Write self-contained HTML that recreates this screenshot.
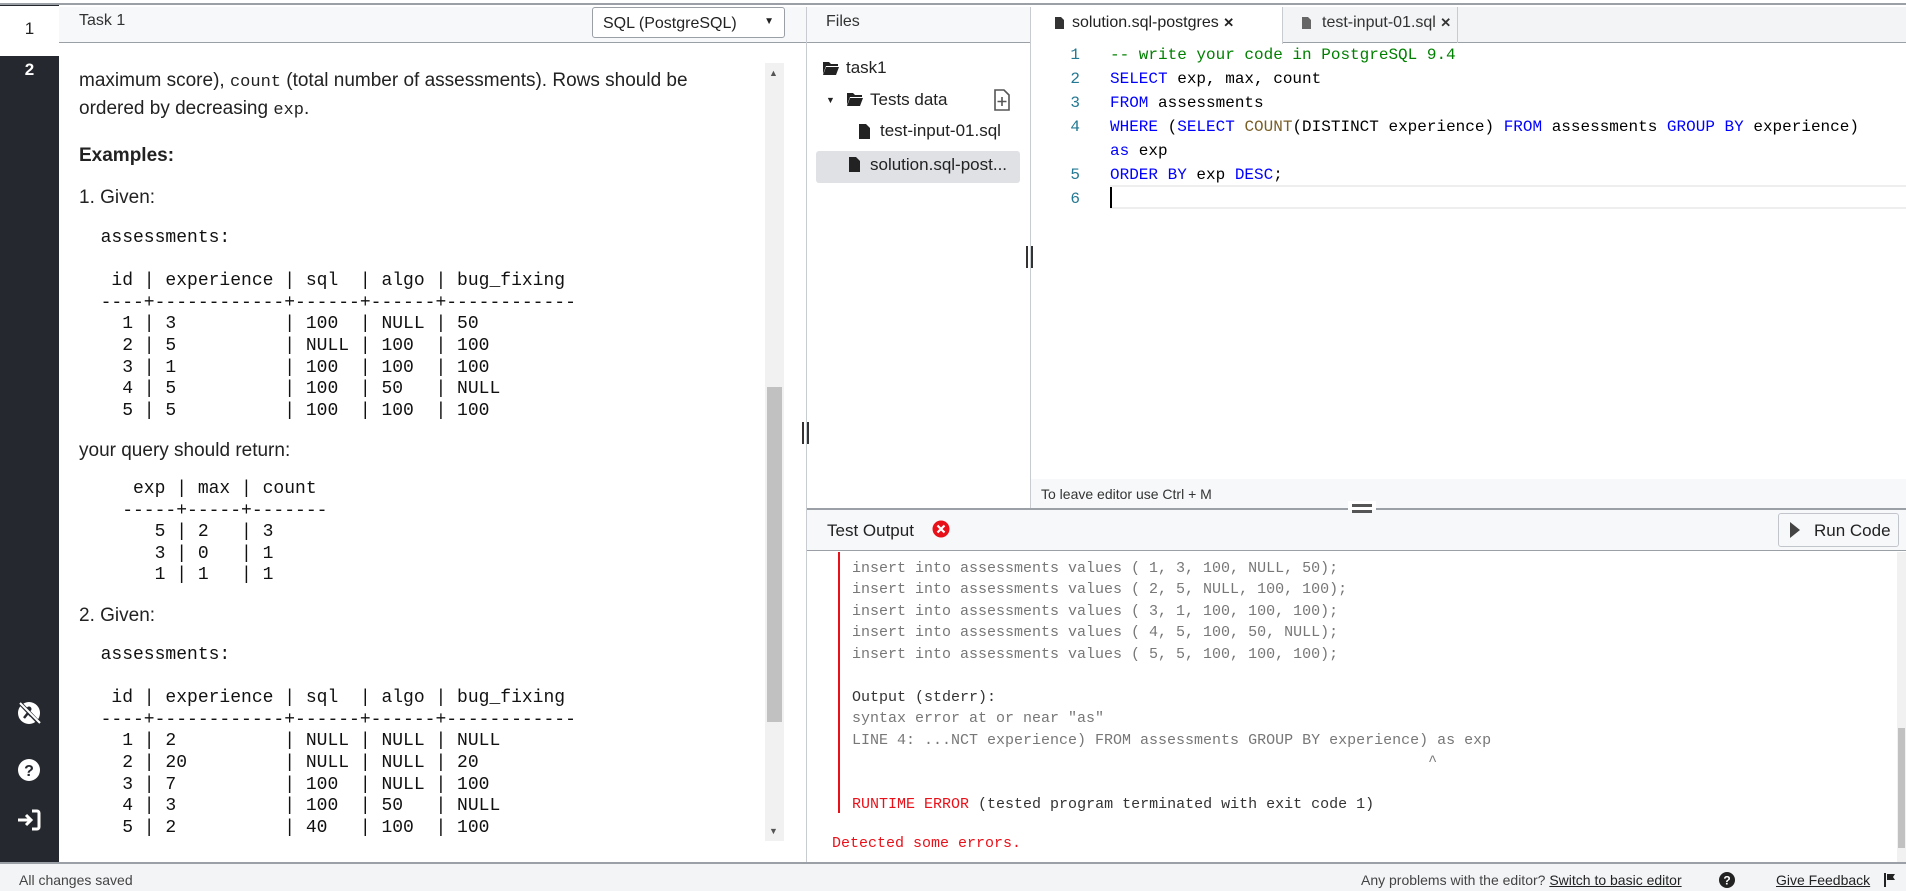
<!DOCTYPE html><html><head><meta charset="utf-8"><style>
*{box-sizing:border-box;margin:0;padding:0}
body{width:1906px;height:891px;overflow:hidden;background:#fff;font-family:"Liberation Sans",sans-serif;color:#222;position:relative}
.a{position:absolute;white-space:pre}
.m{font-family:"Liberation Mono",monospace}
</style></head><body>
<div class="a" style="left:0;top:0;width:1906px;height:5px;background:#fff;border-bottom:2px solid #9aa0a6"></div>
<!-- sidebar -->
<div class="a" style="left:0;top:5px;width:59px;height:858px;background:#25282e"></div>
<div class="a" style="left:0;top:6px;width:59px;height:50px;background:#fff;text-align:center;line-height:46px;font-size:17px">1</div>
<div class="a" style="left:0;top:60px;width:59px;text-align:center;color:#fff;font-weight:bold;font-size:17px">2</div>
<svg class="a" style="left:15px;top:699px" width="28" height="28" viewBox="0 0 28 28"><circle cx="14" cy="14" r="11" fill="#fff"/><circle cx="14" cy="10" r="2.5" fill="#25282e"/><path d="M9 19l4-5 3 3" stroke="#25282e" stroke-width="2.5" fill="none"/><path d="M4 3l21 22" stroke="#25282e" stroke-width="4"/><path d="M5 4l20 20" stroke="#fff" stroke-width="2"/></svg>
<svg class="a" style="left:15px;top:756px" width="28" height="28"><circle cx="14" cy="14" r="11" fill="#fff"/><text x="14" y="20" text-anchor="middle" font-size="16" font-weight="bold" fill="#25282e" font-family="Liberation Sans">?</text></svg>
<svg class="a" style="left:15px;top:806px" width="28" height="28" viewBox="0 0 28 28" fill="none" stroke="#fff" stroke-width="3"><path d="M3 14h12M11 9l5 5-5 5"/><path d="M17 5h5a2 2 0 0 1 2 2v14a2 2 0 0 1-2 2h-5"/></svg>
<!-- task panel -->
<div class="a" style="left:59px;top:7px;width:748px;height:36px;background:#f7f8fa;border-bottom:1px solid #9aa0a6"></div>
<div class="a" style="left:79px;top:12px;font-size:16px;color:#333">Task 1</div>
<div class="a" style="left:592px;top:7px;width:193px;height:31px;border:1px solid #9aa0a6;border-radius:3px;background:#fff;font-size:16px;padding:7px 10px;color:#222">SQL (PostgreSQL)<span style="position:absolute;right:10px;top:8px;font-size:10px">▼</span></div>
<div class="a" style="left:765px;top:63px;width:19px;height:778px;background:#f1f1f1"></div>
<div class="a" style="left:767px;top:387px;width:15px;height:335px;background:#c1c1c1"></div>
<div class="a" style="left:769px;top:68px;font-size:9px;color:#555">▲</div>
<div class="a" style="left:769px;top:826px;font-size:9px;color:#555">▼</div>
<div style="font-size:19px;color:#222">
<div class="a" style="left:79px;top:70px">maximum score), <span class="m" style="font-size:17px">count</span> (total number of assessments). Rows should be</div>
<div class="a" style="left:79px;top:98px">ordered by decreasing <span class="m" style="font-size:17px">exp</span>.</div>
<div class="a" style="left:79px;top:145px;font-weight:bold">Examples:</div>
<div class="a" style="left:79px;top:187px">1. Given:</div>
<div class="a" style="left:79px;top:440px">your query should return:</div>
<div class="a" style="left:79px;top:605px">2. Given:</div>
</div>
<div class="a m" style="left:79px;top:228px;font-size:18px;line-height:21.6px;color:#111">  assessments:

   id | experience | sql  | algo | bug_fixing
  ----+------------+------+------+------------
    1 | 3          | 100  | NULL | 50
    2 | 5          | NULL | 100  | 100
    3 | 1          | 100  | 100  | 100
    4 | 5          | 100  | 50   | NULL
    5 | 5          | 100  | 100  | 100</div>
<div class="a m" style="left:79px;top:479px;font-size:18px;line-height:21.6px;color:#111">     exp | max | count
    -----+-----+-------
       5 | 2   | 3
       3 | 0   | 1
       1 | 1   | 1</div>
<div class="a m" style="left:79px;top:645px;font-size:18px;line-height:21.6px;color:#111">  assessments:

   id | experience | sql  | algo | bug_fixing
  ----+------------+------+------+------------
    1 | 2          | NULL | NULL | NULL
    2 | 20         | NULL | NULL | 20
    3 | 7          | 100  | NULL | 100
    4 | 3          | 100  | 50   | NULL
    5 | 2          | 40   | 100  | 100</div>
<!-- divider -->
<div class="a" style="left:806px;top:7px;width:1px;height:856px;background:#c8cbd0"></div>
<div class="a" style="left:802px;top:422px;width:7px;height:22px;border-left:2px solid #333;border-right:2px solid #333"></div>
<!-- files -->
<div class="a" style="left:807px;top:7px;width:224px;height:36px;background:#f7f8fa;border-bottom:1px solid #9aa0a6"></div>
<div class="a" style="left:826px;top:13px;font-size:16px;color:#333">Files</div>
<div class="a" style="left:1030px;top:7px;width:1px;height:501px;background:#c8cbd0"></div>
<div class="a" style="left:1026px;top:246px;width:7px;height:22px;border-left:2px solid #333;border-right:2px solid #333"></div>
<svg class="a" style="left:823px;top:61px" width="16" height="14"><path d="M0 1h6l2 2h7v2H3L0 13z M3 6h13l-3 8H0z" fill="#222"/></svg>
<div class="a" style="left:846px;top:58px;font-size:17px">task1</div>
<div class="a" style="left:826px;top:95px;font-size:9px">▼</div>
<svg class="a" style="left:847px;top:92px" width="16" height="14"><path d="M0 1h6l2 2h7v2H3L0 13z M3 6h13l-3 8H0z" fill="#222"/></svg>
<div class="a" style="left:870px;top:90px;font-size:17px">Tests data</div>
<svg class="a" style="left:994px;top:89px" width="16" height="22" viewBox="0 0 16 22" fill="none" stroke="#555" stroke-width="1.6"><path d="M1 1h9l5 5v15H1z"/><path d="M8 8v9M3.5 12.5h9"/></svg>
<svg class="a" style="left:859px;top:124px" width="11" height="15"><path d="M0 0h7l4 4v11H0z" fill="#222"/></svg>
<div class="a" style="left:880px;top:121px;font-size:17px">test-input-01.sql</div>
<div class="a" style="left:816px;top:151px;width:204px;height:32px;background:#dfe1e5;border-radius:3px"></div>
<svg class="a" style="left:849px;top:157px" width="11" height="15"><path d="M0 0h7l4 4v11H0z" fill="#222"/></svg>
<div class="a" style="left:870px;top:155px;font-size:17px">solution.sql-post...</div>
<!-- editor tabs -->
<div class="a" style="left:1031px;top:7px;width:875px;height:36px;background:#f3f4f6;border-bottom:1px solid #9aa0a6"></div>
<div class="a" style="left:1031px;top:7px;width:252px;height:37px;background:#fff;border-right:1px solid #c8cbd0"></div>
<svg class="a" style="left:1055px;top:17px" width="9" height="12"><path d="M0 0h6l3 3v9H0z" fill="#333"/></svg>
<div class="a" style="left:1072px;top:14px;font-size:16px;color:#222">solution.sql-postgres <b style="font-size:13px">✕</b></div>
<div class="a" style="left:1457px;top:7px;width:1px;height:36px;background:#c8cbd0"></div>
<svg class="a" style="left:1302px;top:17px" width="9" height="12"><path d="M0 0h6l3 3v9H0z" fill="#666"/></svg>
<div class="a" style="left:1322px;top:14px;font-size:16px;color:#333">test-input-01.sql <b style="font-size:13px">✕</b></div>
<!-- code -->
<div class="a" style="left:1110px;top:185px;width:796px;height:24px;border-top:2px solid #eee;border-bottom:2px solid #eee"></div>
<div class="a" style="left:1110px;top:187px;width:2px;height:21px;background:#000"></div>
<div class="a m" style="left:1046px;top:43px;font-size:16px;line-height:24px;color:#237893;width:34px;text-align:right">1
2
3
4

5
6</div>
<div class="a m" style="left:1110px;top:43px;font-size:16px;line-height:24px;color:#000"><span style="color:#008000">-- write your code in PostgreSQL 9.4</span>
<span style="color:#00f">SELECT</span> exp, max, count
<span style="color:#00f">FROM</span> assessments
<span style="color:#00f">WHERE</span> (<span style="color:#00f">SELECT</span> <span style="color:#795e26">COUNT</span>(DISTINCT experience) <span style="color:#00f">FROM</span> assessments <span style="color:#00f">GROUP BY</span> experience)
<span style="color:#00f">as</span> exp
<span style="color:#00f">ORDER BY</span> exp <span style="color:#00f">DESC</span>;</div>
<div class="a" style="left:1031px;top:479px;width:875px;height:29px;background:#f7f8fa"></div>
<div class="a" style="left:1041px;top:486px;font-size:14px;color:#333">To leave editor use Ctrl + M</div>
<!-- output -->
<div class="a" style="left:807px;top:508px;width:1099px;height:2px;background:#9aa0a6"></div>
<div class="a" style="left:1348px;top:501px;width:28px;height:16px;background:#fff"></div>
<div class="a" style="left:1352px;top:504px;width:20px;height:3px;background:#555"></div>
<div class="a" style="left:1352px;top:510px;width:20px;height:3px;background:#555"></div>
<div class="a" style="left:807px;top:510px;width:1099px;height:41px;background:#f7f8fa;border-bottom:1px solid #9aa0a6"></div>
<div class="a" style="left:1352px;top:510px;width:20px;height:3px;background:#555"></div>
<div class="a" style="left:827px;top:521px;font-size:17px;color:#222">Test Output</div>
<svg class="a" style="left:932px;top:520px" width="18" height="18"><circle cx="9" cy="9" r="8.5" fill="#e8111a"/><path d="M5.5 5.5l7 7M12.5 5.5l-7 7" stroke="#fff" stroke-width="2.2"/></svg>
<div class="a" style="left:1778px;top:513px;width:121px;height:34px;border:1px solid #c2c6cc;border-radius:3px;background:#f7f8fa;font-size:17px;padding:7px 0 0 35px;color:#222">Run Code</div>
<svg class="a" style="left:1790px;top:522px" width="10" height="16"><path d="M0 0l10 8-10 8z" fill="#444"/></svg>
<div class="a" style="left:838px;top:552px;width:2px;height:261px;background:#e8111a"></div>
<div class="a" style="left:1897px;top:552px;width:9px;height:310px;background:#f1f1f1"></div>
<div class="a" style="left:1898px;top:728px;width:7px;height:120px;background:#c1c1c1"></div>
<div class="a m" style="left:852px;top:536px;font-size:15px;line-height:21.5px;color:#777;height:290px;overflow:hidden;clip-path:inset(16px 0 0 0)">Your test case:
insert into assessments values ( 1, 3, 100, NULL, 50);
insert into assessments values ( 2, 5, NULL, 100, 100);
insert into assessments values ( 3, 1, 100, 100, 100);
insert into assessments values ( 4, 5, 100, 50, NULL);
insert into assessments values ( 5, 5, 100, 100, 100);

<span style="color:#333">Output (stderr):</span>
syntax error at or near "as"
LINE 4: ...NCT experience) FROM assessments GROUP BY experience) as exp
                                                                ^

<span style="color:#e8111a">RUNTIME ERROR</span> <span style="color:#333">(tested program terminated with exit code 1)</span></div>
<div class="a m" style="left:832px;top:835px;font-size:15px;color:#e8111a">Detected some errors.</div>
<!-- status -->
<div class="a" style="left:0;top:862px;width:1906px;height:29px;background:#f3f4f6;border-top:2px solid #9aa0a6"></div>
<div class="a" style="left:19px;top:872px;font-size:14px;color:#444">All changes saved</div>
<div class="a" style="left:1361px;top:872px;font-size:14px;color:#444">Any problems with the editor? <span style="text-decoration:underline;color:#222">Switch to basic editor</span></div>
<svg class="a" style="left:1719px;top:872px" width="16" height="16"><circle cx="8" cy="8" r="8" fill="#222"/><text x="8" y="12.5" text-anchor="middle" font-size="12" font-weight="bold" fill="#fff" font-family="Liberation Sans">?</text></svg>
<div class="a" style="left:1776px;top:872px;font-size:14px;color:#222;text-decoration:underline">Give Feedback</div>
<svg class="a" style="left:1884px;top:873px" width="12" height="14"><path d="M1 0v14" stroke="#222" stroke-width="2"/><path d="M3 1h8l-2 3 2 3H3z" fill="#222"/></svg>
</body></html>
